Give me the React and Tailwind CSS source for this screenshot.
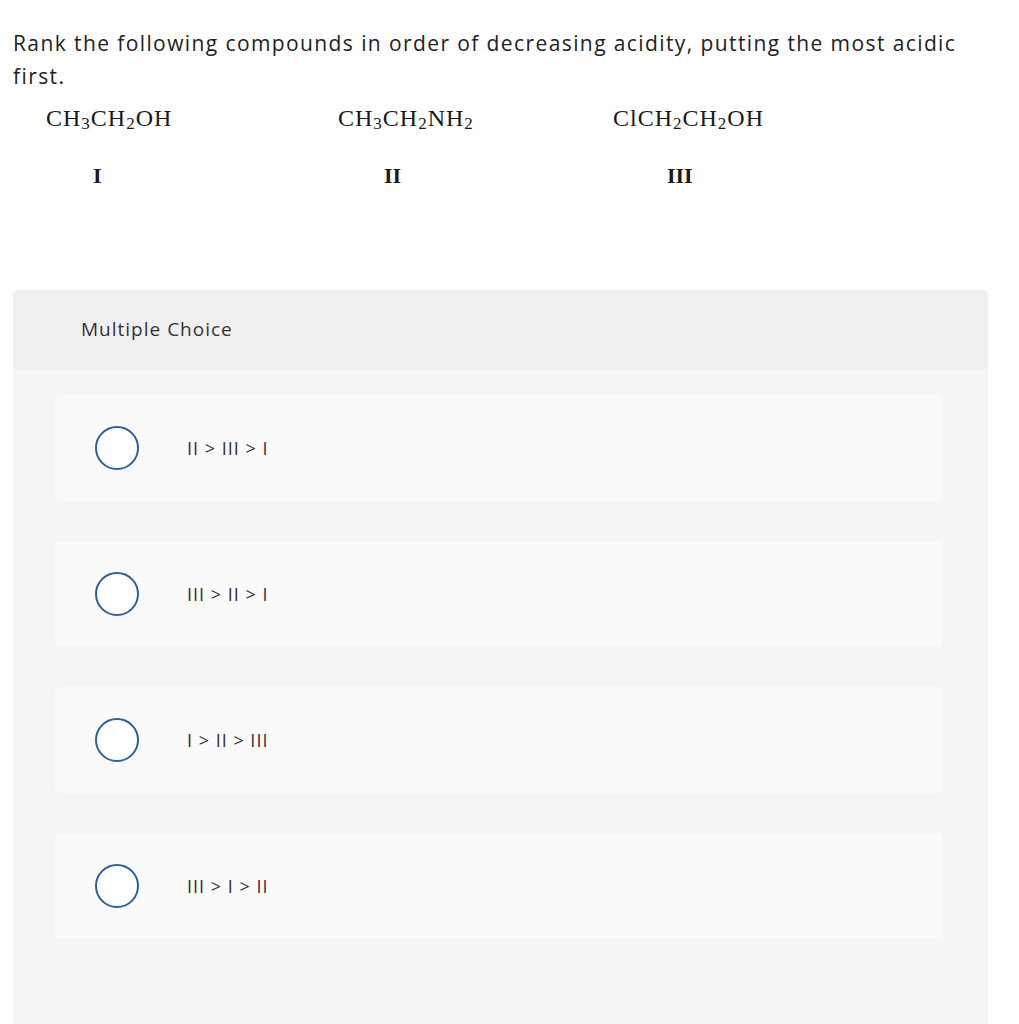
import React from "react";

const serif = { fontFamily: '"Liberation Serif", "Times New Roman", serif' };

const Formula = ({ parts }) => (
  <span className="text-[24px] text-[#1a1a1a] tracking-[1px]" style={serif}>
    {parts.map((p, i) =>
      typeof p === "number" ? (
        <span key={i} className="text-[17px] relative top-[3px]">
          {p}
        </span>
      ) : (
        <span key={i}>{p}</span>
      ),
    )}
  </span>
);

const compounds = [
  { parts: ["CH", 3, "CH", 2, "OH"], label: "I", x: "w-[325px]", pad: "pl-[33px]", labelPad: "pl-[47px]" },
  { parts: ["CH", 3, "CH", 2, "NH", 2], label: "II", x: "w-[275px]", pad: "pl-0", labelPad: "pl-[46px]" },
  { parts: ["ClCH", 2, "CH", 2, "OH"], label: "III", x: "w-[200px]", pad: "pl-0", labelPad: "pl-[54px]" },
];

const options = ["II > III > I", "III > II > I", "I > II > III", "III > I > II"];

export default function App() {
  return (
    <div
      className="bg-white h-[1024px] overflow-hidden px-[13px] pt-[27px] text-[#222]"
      style={{ fontFamily: '"Open Sans", "Lato", sans-serif' }}
    >
      <p className="text-[21px] leading-[33px] tracking-[1.4px] w-[975px]">
        Rank the following compounds in order of decreasing acidity, putting the most acidic first.
      </p>

      <div className="flex mt-[10px]">
        {compounds.map((c) => (
          <div key={c.label} className={`${c.x} ${c.pad} shrink-0`}>
            <div className="h-[30px] flex items-center">
              <Formula parts={c.parts} />
            </div>
            <div
              className={`${c.labelPad} mt-[28px] text-[22px] font-bold text-[#1a1a1a] leading-[30px]`}
              style={serif}
            >
              {c.label}
            </div>
          </div>
        ))}
      </div>

      <div className="mt-[99px] w-[975px] rounded-t-[5px] bg-[#f5f5f5] min-h-[800px]">
        <div className="h-[79px] bg-[#f0f0f0] rounded-t-[5px] flex items-center pl-[68px] text-[19px] tracking-[1px] text-[#333]">
          Multiple Choice
        </div>
        <div className="flex flex-col gap-[40px] pt-[26px] pl-[42px] pr-[45px]">
          {options.map((o) => (
            <div
              key={o}
              className="h-[106px] bg-[#fafafa] rounded-[5px] flex items-center pl-[40px]"
            >
              <div className="w-[44px] h-[44px] rounded-full border-[2px] border-[#2b6196] bg-white shrink-0" />
              <span className="ml-[48px] text-[18px] tracking-[1px] text-[#333]">{o}</span>
            </div>
          ))}
        </div>
      </div>
    </div>
  );
}
